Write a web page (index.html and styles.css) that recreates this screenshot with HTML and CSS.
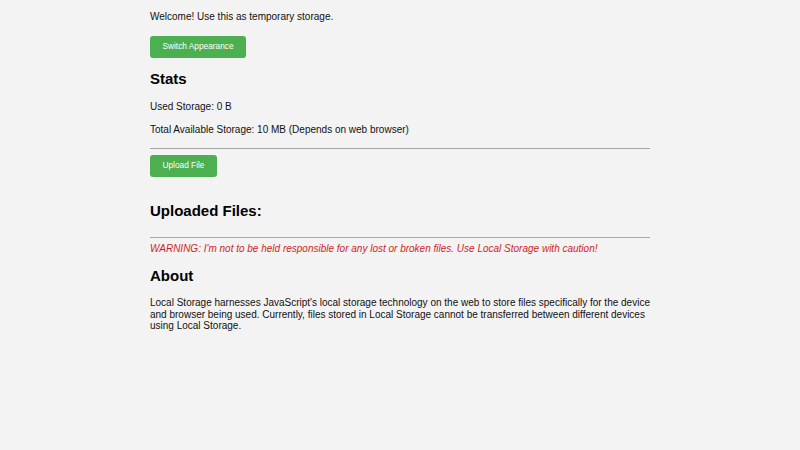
FILE: index.html
```html
<!DOCTYPE html>
<html lang="en">
<head>
<meta charset="utf-8">
<title>Local Storage</title>
<link rel="stylesheet" href="styles.css">
</head>
<body>
<main class="container">
  <p class="welcome">Welcome! Use this as temporary storage.</p>
  <div class="actions first"><button class="btn">Switch Appearance</button></div>
  <h2 class="title stats-title">Stats</h2>
  <p class="stat used">Used Storage: 0 B</p>
  <p class="stat total">Total Available Storage: 10 MB (Depends on web browser)</p>
  <hr class="rule rule-a">
  <div class="actions upload"><button class="btn">Upload File</button></div>
  <h2 class="title files-title">Uploaded Files:</h2>
  <div class="file-list"></div>
  <hr class="rule rule-b">
  <p class="warning">WARNING: I'm not to be held responsible for any lost or broken files. Use Local Storage with caution!</p>
  <h2 class="title about-title">About</h2>
  <p class="about">Local Storage harnesses JavaScript's local storage technology on the web to store files specifically for the device and browser being used. Currently, files stored in Local Storage cannot be transferred between different devices using Local Storage.</p>
</main>
</body>
</html>
```
FILE: styles.css
```css
html, body {
  margin: 0;
  padding: 0;
  background: #f3f3f3;
}
body {
  font-family: "Liberation Sans", Arial, sans-serif;
  font-size: 10px;
  line-height: 11.5px;
  color: #111;
}
.container {
  width: 500px;
  margin: 0 auto;
  padding-top: 11px;
  display: flex;
  flex-direction: column;
}
p { margin: 0; }
.title {
  margin: 0;
  font-size: 15px;
  line-height: 17px;
  font-weight: bold;
  color: #000;
}
.actions { display: flex; }
.btn {
  font-family: "Liberation Sans", Arial, sans-serif;
  font-size: 8.3px;
  line-height: 9.5px;
  color: #fff;
  background: #4caf50;
  border: none;
  border-radius: 3px;
  padding: 6px 12.5px 6.5px;
  cursor: pointer;
}
.actions.first { margin-top: 13.5px; }
.stats-title { margin-top: 12px; }
.used { margin-top: 13.5px; }
.total { margin-top: 12px; }
.rule {
  width: 100%;
  border: none;
  border-top: 1px solid #a6a6a6;
  margin: 0;
  height: 0;
}
.rule-a { margin-top: 12px; }
.actions.upload { margin-top: 6px; }
.files-title { margin-top: 25.5px; }
.rule-b { margin-top: 17.5px; }
.warning {
  margin-top: 5px;
  color: #d11f1f;
  font-style: italic;
}
.about-title { margin-top: 13px; }
.about { margin-top: 13px; }
```
